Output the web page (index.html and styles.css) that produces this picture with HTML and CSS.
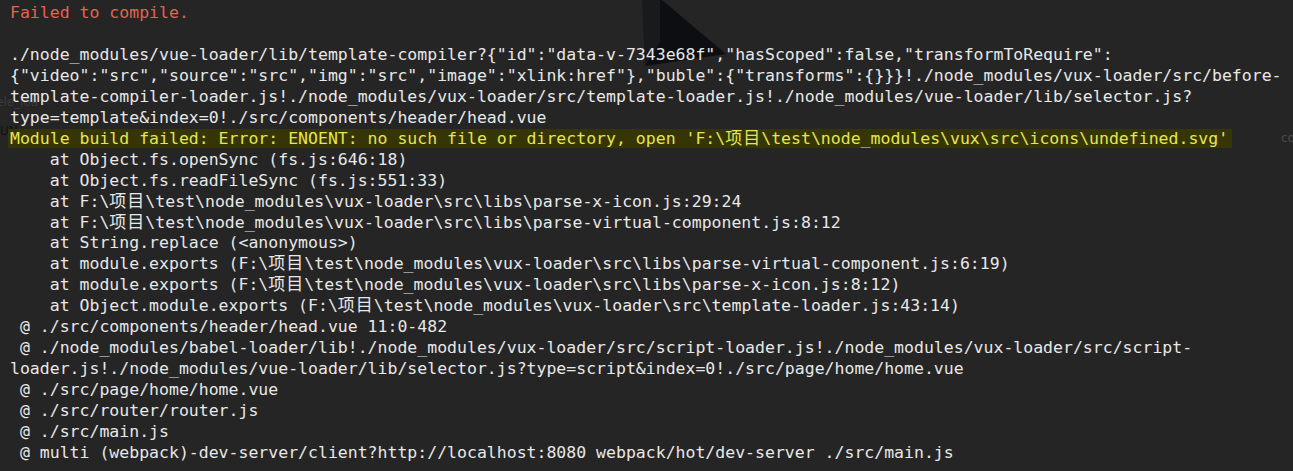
FILE: index.html
```html
<!DOCTYPE html>
<html lang="en">
<head>
<meta charset="utf-8">
<title>Failed to compile</title>
<link rel="stylesheet" href="styles.css">
</head>
<body>
<div class="overlay">
  <svg class="pointer" width="100" height="70" viewBox="0 0 100 70">
    <polygon points="2,0 20,0 20,42 5,66" fill="#191a1b"/>
    <polygon points="20,0 22,0 86,54 5,66 20,42" fill="#0c0e11"/>
  </svg>
  <span class="ghost ghost-a">ele_loa</span>
  <span class="ghost ghost-b">UN</span>
  <span class="ghost ghost-c">co</span>
</div>
<pre class="log"><span class="error">Failed to compile.</span>

./node_modules/vue-loader/lib/template-compiler?{"id":"data-v-7343e68f","hasScoped":false,"transformToRequire":
{"video":"src","source":"src","img":"src","image":"xlink:href"},"buble":{"transforms":{}}}!./node_modules/vux-loader/src/before-
template-compiler-loader.js!./node_modules/vux-loader/src/template-loader.js!./node_modules/vue-loader/lib/selector.js?
type=template&amp;index=0!./src/components/header/head.vue
<span class="warn">Module build failed: Error: ENOENT: no such file or directory, open 'F:\<span class="cjk">项目</span>\test\node_modules\vux\src\icons\undefined.svg'</span>
    at Object.fs.openSync (fs.js:646:18)
    at Object.fs.readFileSync (fs.js:551:33)
    at F:\<span class="cjk">项目</span>\test\node_modules\vux-loader\src\libs\parse-x-icon.js:29:24
    at F:\<span class="cjk">项目</span>\test\node_modules\vux-loader\src\libs\parse-virtual-component.js:8:12
    at String.replace (&lt;anonymous&gt;)
    at module.exports (F:\<span class="cjk">项目</span>\test\node_modules\vux-loader\src\libs\parse-virtual-component.js:6:19)
    at module.exports (F:\<span class="cjk">项目</span>\test\node_modules\vux-loader\src\libs\parse-x-icon.js:8:12)
    at Object.module.exports (F:\<span class="cjk">项目</span>\test\node_modules\vux-loader\src\template-loader.js:43:14)
 @ ./src/components/header/head.vue 11:0-482
 @ ./node_modules/babel-loader/lib!./node_modules/vux-loader/src/script-loader.js!./node_modules/vux-loader/src/script-
loader.js!./node_modules/vue-loader/lib/selector.js?type=script&amp;index=0!./src/page/home/home.vue
 @ ./src/page/home/home.vue
 @ ./src/router/router.js
 @ ./src/main.js
 @ multi (webpack)-dev-server/client?http://localhost:8080 webpack/hot/dev-server ./src/main.js</pre>
</body>
</html>
```
FILE: styles.css
```css
html, body {
  margin: 0;
  padding: 0;
  background: #252525;
}

body {
  position: relative;
  width: 1293px;
  height: 471px;
  overflow: hidden;
}

.log {
  margin: 0;
  padding: 3px 0 0 10px;
  font-family: "DejaVu Sans Mono", "Liberation Mono", "Noto Sans CJK SC", monospace;
  font-size: 16.5px;
  line-height: 20.95px;
  color: #e8e8e8;
  white-space: pre;
  position: relative;
  z-index: 1;
}

.error {
  color: #e3644f;
}

.warn {
  color: #e6e64e;
  background: #353506;
  padding-right: 4px;
  margin-left: -2px;
  padding-left: 2px;
}

.cjk {
  font-family: "Noto Sans CJK SC", sans-serif;
  font-size: 17px;
  letter-spacing: 1px;
  line-height: 0;
}

.overlay {
  position: absolute;
  inset: 0;
  z-index: 0;
  pointer-events: none;
}

.pointer {
  position: absolute;
  left: 640px;
  top: 0;
}

.ghost {
  position: absolute;
  font-family: "DejaVu Sans", sans-serif;
  font-size: 12px;
  color: #3c3c3c;
}

.ghost-a {
  left: -4px;
  top: 95px;
}

.ghost-b {
  left: 0;
  top: 124px;
  color: #111;
}

.ghost-c {
  left: 1281px;
  top: 131px;
  color: #4a4a4a;
}
```
